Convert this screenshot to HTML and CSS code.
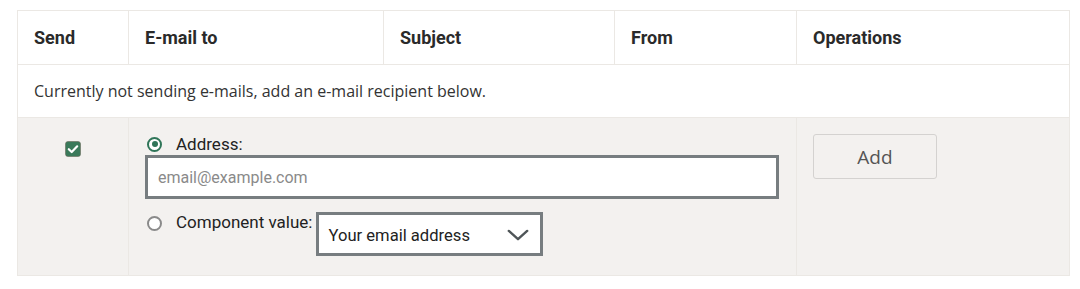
FILE: index.html
```html
<!DOCTYPE html>
<html>
<head>
<meta charset="utf-8">
<link rel="stylesheet" href="styles.css">
</head>
<body>
<table class="mail-table">
  <colgroup>
    <col class="col-send">
    <col class="col-to">
    <col class="col-subject">
    <col class="col-from">
    <col class="col-ops">
  </colgroup>
  <thead>
    <tr>
      <th>Send</th>
      <th>E-mail to</th>
      <th>Subject</th>
      <th>From</th>
      <th>Operations</th>
    </tr>
  </thead>
  <tbody>
    <tr class="msg-row">
      <td colspan="5">Currently not sending e-mails, add an e-mail recipient below.</td>
    </tr>
    <tr class="form-row">
      <td class="cell-send">
        <span class="checkbox">
          <svg viewBox="0 0 16 16" width="16" height="16"><rect x="0.5" y="0.5" width="15" height="15" rx="2.5" fill="#3a7a5a" stroke="#6a6a5a" stroke-width="0.6"/><path d="M3.8 8.2 L6.7 11 L12.2 5.3" fill="none" stroke="#fff" stroke-width="2.2" stroke-linecap="round" stroke-linejoin="round"/></svg>
        </span>
      </td>
      <td class="cell-to" colspan="3">
        <div class="option">
          <span class="radio checked"></span>
          <span class="opt-label">Address:</span>
        </div>
        <div class="text-input">email@example.com</div>
        <div class="option option-select">
          <span class="radio"></span>
          <span class="opt-label">Component value:</span>
          <div class="select">
            <span>Your email address</span>
            <svg class="chev" viewBox="0 0 24 14" width="22" height="13"><path d="M2 2 L12 11 L22 2" fill="none" stroke="#4f5558" stroke-width="2.6" stroke-linecap="round" stroke-linejoin="round"/></svg>
          </div>
        </div>
      </td>
      <td class="cell-ops">
        <button class="add-btn">Add</button>
      </td>
    </tr>
  </tbody>
</table>
</body>
</html>
```

FILE: styles.css
```css
html, body {
  margin: 0;
  padding: 0;
  background: #ffffff;
}
body {
  padding: 10px 11px 0 17px;
}
.mail-table {
  border-collapse: collapse;
  width: 1052px;
  table-layout: fixed;
  font-family: Roboto, "Liberation Sans", sans-serif;
  color: #222;
}
.col-send { width: 111px; }
.col-to { width: 255px; }
.col-subject { width: 231px; }
.col-from { width: 182px; }
.col-ops { width: 273px; }

.mail-table th, .mail-table td {
  border: 1px solid #ebe8e4;
  padding: 0 16px;
  text-align: left;
  vertical-align: top;
}
.mail-table th {
  height: 54px;
  box-sizing: border-box;
  vertical-align: middle;
  font-family: Roboto, "Liberation Sans", sans-serif;
  font-weight: 700;
  font-size: 18px;
  color: #2a2a2a;
}

.msg-row td {
  height: 53px;
  box-sizing: border-box;
  vertical-align: middle;
  font-family: "Open Sans", Roboto, sans-serif;
  font-weight: 400;
  font-size: 16px;
  color: #333;
}
.form-row td {
  background: #f3f1ef;
  height: 158px;
  box-sizing: border-box;
}
.cell-send {
  text-align: center !important;
  padding-top: 23px !important;
}
.checkbox {
  display: inline-block;
  width: 16px;
  height: 16px;
}
.checkbox svg { display: block; }

.cell-to {
  padding: 15px 16px 0 16px !important;
}
.option {
  display: flex;
  align-items: center;
  gap: 14px;
  height: 22px;
  padding-left: 2px;
}
.radio {
  width: 11px;
  height: 11px;
  border: 2px solid #8a8a8a;
  border-radius: 50%;
  background: #fff;
  position: relative;
  flex: none;
}
.radio.checked {
  border-color: #2f7558;
}
.radio.checked::after {
  content: "";
  position: absolute;
  left: 2.5px;
  top: 2.5px;
  width: 6px;
  height: 6px;
  border-radius: 50%;
  background: #2f7558;
}
.opt-label {
  font-size: 17px;
  color: #222;
}
.text-input {
  width: 634px;
  height: 44px;
  box-sizing: border-box;
  border: 3px solid #777d80;
  background: #fff;
  font-size: 16px;
  color: #8a8a8a;
  padding: 0 10px;
  display: flex;
  align-items: center;
}
.option-select {
  margin-top: 13px;
  align-items: flex-start;
  height: auto;
}
.option-select .radio {
  margin-top: 4px;
}
.option-select .opt-label {
  line-height: 20px;
}
.option-select .select {
  margin-left: -10px;
}
.select {
  width: 227px;
  height: 44px;
  box-sizing: border-box;
  border: 3px solid #777d80;
  background: #fff;
  display: flex;
  align-items: center;
  justify-content: space-between;
  padding: 2px 11px 0 9px;
  font-size: 16.6px;
  color: #222;
}
.chev { display: block; }

.cell-ops {
  padding-top: 16px !important;
}
.add-btn {
  width: 124px;
  height: 45px;
  border: 1px solid #d4d2d0;
  border-radius: 3px;
  background: #f3f1ef;
  font-family: "Open Sans", "DejaVu Sans", sans-serif;
  font-size: 19px;
  color: #555;
  padding: 0;
  margin: 0;
}
```
